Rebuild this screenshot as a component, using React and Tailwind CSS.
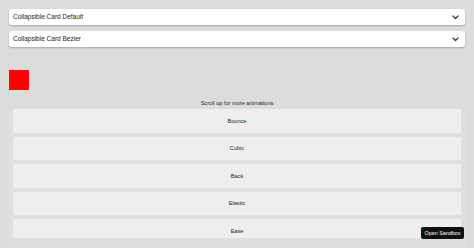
const Chevron = () => (
    <svg width="7" height="5" viewBox="0 0 7 5" fill="none" stroke="#333" strokeWidth="1.2" strokeLinecap="round" strokeLinejoin="round">
        <path d="M1 1l2.5 2.5L6 1" />
    </svg>
);

const Card = ({ title }) => (
    <div className="h-4 bg-white rounded-[3px] shadow-[0_1px_2px_rgba(0,0,0,0.25)] flex items-center justify-between pl-1 pr-[6px]">
        <span className="text-[6.5px] text-[#222]">{title}</span>
        <Chevron />
    </div>
);

const animations = ['Bounce', 'Cubic', 'Back', 'Elastic', 'Ease'];

export default function App() {
    return (
        <div className="w-[474px] h-[248px] overflow-hidden bg-[#dcdcdc] font-['Liberation_Sans',Arial,sans-serif] relative">
            <div className="flex flex-col gap-[6px] px-[9px] pt-[9px]">
                <Card title="Collapsible Card Default" />
                <Card title="Collapsible Card Bezier" />
            </div>
            <div className="ml-[9px] mt-[23px] w-5 h-5 bg-[#ff0000]" />
            <div className="text-center text-[5.6px] text-[#222] mt-[8px] leading-[10px]">Scroll up for more animations</div>
            <div className="mx-[8px] mt-[1px] bg-[#dfdfdf] px-[5px] h-[200px]">
                <div className="flex flex-col gap-[4px] h-[129px] overflow-hidden">
                    {animations.map((a) => (
                        <div key={a} className="h-[23.5px] shrink-0 bg-[#eeeeee] flex items-center justify-center text-[5.6px] text-[#222]">
                            {a}
                        </div>
                    ))}
                </div>
            </div>
            <button className="absolute left-[421px] top-[227px] w-[43px] h-[12px] bg-[#111] rounded-[2px] text-white text-[5.4px] flex items-center justify-center">
                Open Sandbox
            </button>
        </div>
    );
}
